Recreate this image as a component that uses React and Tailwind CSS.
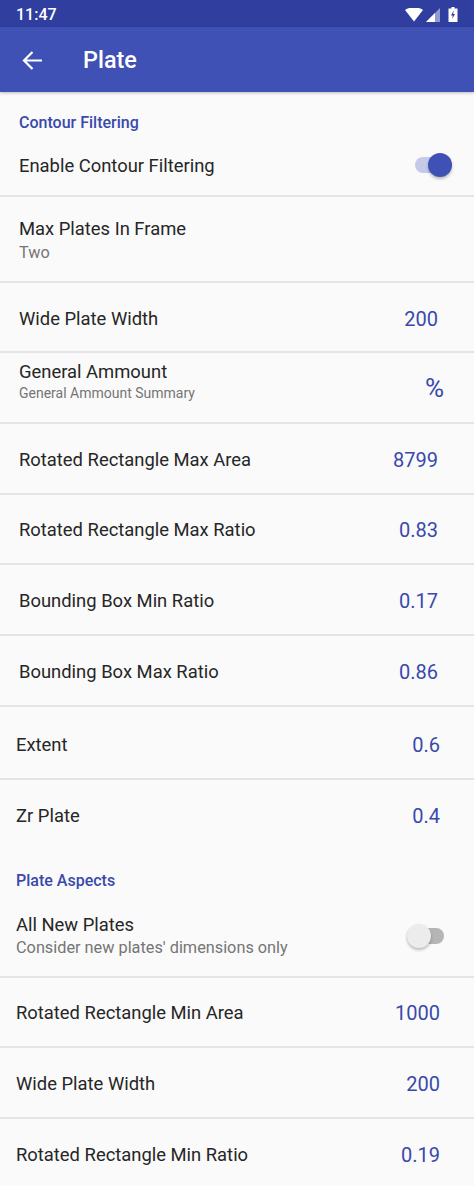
import React from 'react';

const ValueRow = ({ title, value, height = 'h-[71px]', indent = 'pl-[19px]', right = 'pr-[36px]', top = 'pt-[2px]' }) => (
  <div className={`flex items-center justify-between border-b-2 border-[#e4e4e4] ${height} ${indent} ${right} ${top}`}>
    <span className="text-[18.4px] text-[#262626]">{title}</span>
    <span className="text-[20px] text-[#3949ab]">{value}</span>
  </div>
);

const Toggle = ({ on }) => (
  <div className="relative h-[16px] w-[37px]">
    <div className={`h-full rounded-full ${on ? 'bg-[#c5cae9]' : 'bg-[#b5b5b5]'}`} />
    <div
      className={`absolute top-[-4px] h-[24px] w-[24px] rounded-full shadow-[0_2px_3px_rgba(0,0,0,0.25)] ${
        on ? 'right-0 bg-[#3f51b5]' : 'left-0 bg-[#ececec]'
      }`}
    />
  </div>
);

const StatusIcons = () => (
  <div className="flex items-center">
    <svg width="18" height="14" viewBox="0 0 18 14" className="mr-[3px]">
      <path d="M0 2C2.500 0 5.600-.5 9-.5s6.500.5 9 2.500L9 13.500z" fill="#fff" />
    </svg>
    <svg width="14" height="14" viewBox="0 0 14 14" className="mr-[8px]">
      <path d="M14 0v14H0z" fill="#8f9bd0" />
      <path d="M9 5v9H0z" fill="#fff" />
    </svg>
    <svg width="10" height="15" viewBox="0 0 9 15" className="mr-[16px]">
      <path d="M3 0h3v1.500h3V15H0V1.500h3z" fill="#fff" />
      <path d="M5.200 3.500 2.500 8.500h1.800L3.700 12l2.800-5H4.700z" fill="#303f9f" />
    </svg>
  </div>
);

const App = () => (
  <div className="h-[1186px] w-[474px] overflow-hidden bg-[#fafafa] font-['Roboto',sans-serif]">
    <div className="flex h-[27px] items-center justify-between bg-[#303f9f] pl-[16px] pt-[2px] text-white">
      <span className="text-[16px] font-medium">11:47</span>
      <StatusIcons />
    </div>
    <div className="flex h-[65px] items-center bg-[#3f51b5] pl-[22px] pt-[2px] text-white shadow-[0_1px_3px_rgba(0,0,0,0.25)]">
      <svg width="21" height="21" viewBox="0 0 21 21" fill="none" stroke="#fff" strokeWidth="2.200">
        <path d="M20 10.500H2M10.500 2 2 10.500l8.500 8.500" />
      </svg>
      <span className="ml-[40px] text-[23.4px] font-medium">Plate</span>
    </div>

    <div className="flex h-[60px] items-end pb-[17px] pl-[19px] text-[16px] font-medium text-[#3949ab]">
      Contour Filtering
    </div>
    <div className="flex h-[45px] items-start justify-between border-b-2 border-[#e4e4e4] pl-[19px] pr-[22px]">
      <span className="text-[18.4px] text-[#262626]">Enable Contour Filtering</span>
      <div className="pt-[5px]"><Toggle on /></div>
    </div>

    <div className="flex h-[86px] flex-col border-b-2 border-[#e4e4e4] pl-[19px] pt-[20px]">
      <span className="text-[18.4px] leading-[24px] text-[#262626]">Max Plates In Frame</span>
      <span className="text-[16.3px] leading-[24px] text-[#757575]">Two</span>
    </div>
    <ValueRow title="Wide Plate Width" value="200" height="h-[70px]" top="pt-[3px]" />
    <div className="flex h-[71px] items-start justify-between border-b-2 border-[#e4e4e4] pl-[19px] pr-[30px] pt-[7px]">
      <div className="flex flex-col">
        <span className="text-[18.4px] leading-[24px] text-[#262626]">General Ammount</span>
        <span className="text-[14px] leading-[19px] text-[#757575]">General Ammount Summary</span>
      </div>
      <span className="pt-[13px] text-[26px] leading-[30px] text-[#3949ab]">%</span>
    </div>
    <ValueRow title="Rotated Rectangle Max Area" value="8799" />
    <ValueRow title="Rotated Rectangle Max Ratio" value="0.83" height="h-[70px]" />
    <ValueRow title="Bounding Box Min Ratio" value="0.17" />
    <ValueRow title="Bounding Box Max Ratio" value="0.86" />
    <ValueRow title="Extent" value="0.6" height="h-[73px]" indent="pl-[16px]" right="pr-[34px]" top="pt-[4px]" />
    <div className="flex h-[71px] items-center justify-between pl-[16px] pr-[34px]">
      <span className="text-[18.4px] text-[#262626]">Zr Plate</span>
      <span className="text-[20px] text-[#3949ab]">0.4</span>
    </div>

    <div className="pl-[16px] pt-[19px] text-[16px] font-medium leading-[22px] text-[#3949ab]">Plate Aspects</div>
    <div className="flex h-[86px] items-center justify-between border-b-2 border-[#e4e4e4] pl-[16px] pr-[30px] pt-[3px]">
      <div className="flex flex-col">
        <span className="text-[18.4px] leading-[24px] text-[#262626]">All New Plates</span>
        <span className="text-[16.3px] leading-[22px] text-[#757575]">Consider new plates' dimensions only</span>
      </div>
      <Toggle />
    </div>
    <ValueRow title="Rotated Rectangle Min Area" value="1000" height="h-[70px]" indent="pl-[16px]" right="pr-[34px]" />
    <ValueRow title="Wide Plate Width" value="200" indent="pl-[16px]" right="pr-[34px]" />
    <div className="flex h-[71px] items-center justify-between pl-[16px] pr-[34px]">
      <span className="text-[18.4px] text-[#262626]">Rotated Rectangle Min Ratio</span>
      <span className="text-[20px] text-[#3949ab]">0.19</span>
    </div>
  </div>
);

export default App;
